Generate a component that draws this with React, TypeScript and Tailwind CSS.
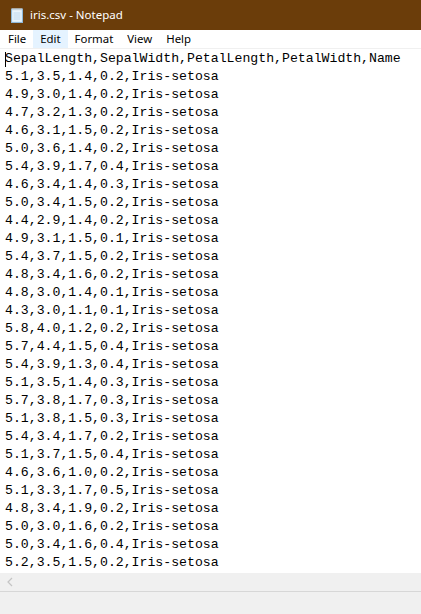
const rows = [
  'SepalLength,SepalWidth,PetalLength,PetalWidth,Name',
  '5.1,3.5,1.4,0.2,Iris-setosa',
  '4.9,3.0,1.4,0.2,Iris-setosa',
  '4.7,3.2,1.3,0.2,Iris-setosa',
  '4.6,3.1,1.5,0.2,Iris-setosa',
  '5.0,3.6,1.4,0.2,Iris-setosa',
  '5.4,3.9,1.7,0.4,Iris-setosa',
  '4.6,3.4,1.4,0.3,Iris-setosa',
  '5.0,3.4,1.5,0.2,Iris-setosa',
  '4.4,2.9,1.4,0.2,Iris-setosa',
  '4.9,3.1,1.5,0.1,Iris-setosa',
  '5.4,3.7,1.5,0.2,Iris-setosa',
  '4.8,3.4,1.6,0.2,Iris-setosa',
  '4.8,3.0,1.4,0.1,Iris-setosa',
  '4.3,3.0,1.1,0.1,Iris-setosa',
  '5.8,4.0,1.2,0.2,Iris-setosa',
  '5.7,4.4,1.5,0.4,Iris-setosa',
  '5.4,3.9,1.3,0.4,Iris-setosa',
  '5.1,3.5,1.4,0.3,Iris-setosa',
  '5.7,3.8,1.7,0.3,Iris-setosa',
  '5.1,3.8,1.5,0.3,Iris-setosa',
  '5.4,3.4,1.7,0.2,Iris-setosa',
  '5.1,3.7,1.5,0.4,Iris-setosa',
  '4.6,3.6,1.0,0.2,Iris-setosa',
  '5.1,3.3,1.7,0.5,Iris-setosa',
  '4.8,3.4,1.9,0.2,Iris-setosa',
  '5.0,3.0,1.6,0.2,Iris-setosa',
  '5.0,3.4,1.6,0.4,Iris-setosa',
  '5.2,3.5,1.5,0.2,Iris-setosa',
];

const menu = ['File', 'Edit', 'Format', 'View', 'Help'];

function NotepadIcon() {
  return (
    <svg width="12" height="16" viewBox="0 0 12 16">
      <rect x="0.5" y="2" width="11" height="13.5" fill="#cfe6f7" stroke="#8fb8d8" />
      <rect x="1.5" y="3" width="9" height="11.5" fill="#e9f4fc" />
      <path d="M2 1v2.5M4 1v2.5M6 1v2.5M8 1v2.5M10 1v2.5" stroke="#d8d8d8" strokeWidth="1" />
      <path d="M2.5 6h7M2.5 8h7M2.5 10h7M2.5 12h7" stroke="#b6d3ea" strokeWidth="0.8" />
    </svg>
  );
}

export default function App() {
  return (
    <div className="flex h-[614px] w-[421px] flex-col overflow-hidden bg-white font-['Noto_Sans',sans-serif]">
      {/* title bar */}
      <div className="flex h-[30px] shrink-0 items-center gap-[7px] bg-[#6b3d0a] pl-[11px]">
        <NotepadIcon />
        <span className="text-[11.5px] text-white">iris.csv - Notepad</span>
      </div>

      {/* menu bar */}
      <div className="flex h-[18px] shrink-0 items-stretch pl-[1px] text-[11.4px] text-black">
        {menu.map((m) => (
          <div
            key={m}
            className={`flex items-center px-[7px] ${m === 'Edit' ? 'bg-[#e5f3ff]' : ''}`}
          >
            {m}
          </div>
        ))}
      </div>
      <div className="h-px shrink-0 bg-[#f0f0f0]" />

      {/* text area */}
      <div className="relative flex-1 overflow-hidden pl-[5px] pt-[1px] font-['Liberation_Mono',monospace] text-[13.2px] leading-[18px] text-black">
        <div className="absolute left-[5px] top-[3px] h-[15px] w-px bg-black" />
        {rows.map((r, i) => (
          <div key={i} className="whitespace-pre">
            {r}
          </div>
        ))}
      </div>

      {/* horizontal scrollbar */}
      <div className="flex h-[18px] shrink-0 items-center bg-[#f0f0f0] pl-[6px]">
        <svg width="8" height="10" viewBox="0 0 8 10">
          <path d="M6 1L2 5l4 4" fill="none" stroke="#c4c4c4" strokeWidth="1.2" />
        </svg>
      </div>
      <div className="h-px shrink-0 bg-[#d7d7d7]" />

      {/* status bar */}
      <div className="h-[22px] shrink-0 bg-[#f0f0f0]" />
    </div>
  );
}
